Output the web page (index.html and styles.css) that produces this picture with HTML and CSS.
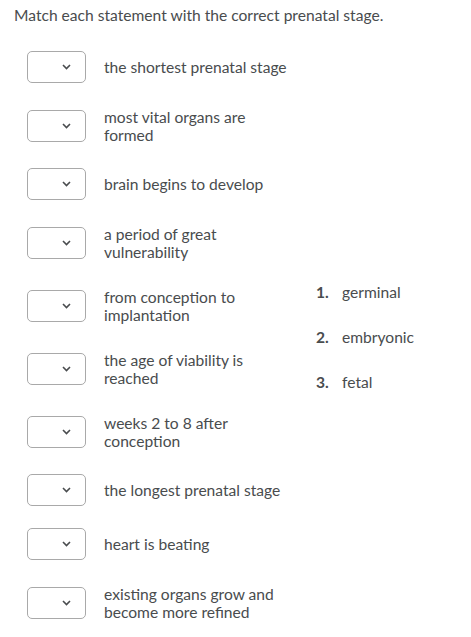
FILE: index.html
```html
<!DOCTYPE html>
<html>
<head>
<meta charset="utf-8">
<link rel="stylesheet" href="styles.css">
</head>
<body>
<p class="prompt">Match each statement with the correct prenatal stage.</p>
<div class="matching">
  <div class="rows">
    <div class="row"><div class="select"><svg width="9" height="6" viewBox="0 0 9 6"><path d="M1 1 L4.5 4.5 L8 1" fill="none" stroke="#494c4e" stroke-width="1.6"/></svg></div><div class="stmt">the shortest prenatal stage</div></div>
    <div class="row"><div class="select"><svg width="9" height="6" viewBox="0 0 9 6"><path d="M1 1 L4.5 4.5 L8 1" fill="none" stroke="#494c4e" stroke-width="1.6"/></svg></div><div class="stmt">most vital organs are formed</div></div>
    <div class="row"><div class="select"><svg width="9" height="6" viewBox="0 0 9 6"><path d="M1 1 L4.5 4.5 L8 1" fill="none" stroke="#494c4e" stroke-width="1.6"/></svg></div><div class="stmt">brain begins to develop</div></div>
    <div class="row"><div class="select"><svg width="9" height="6" viewBox="0 0 9 6"><path d="M1 1 L4.5 4.5 L8 1" fill="none" stroke="#494c4e" stroke-width="1.6"/></svg></div><div class="stmt">a period of great vulnerability</div></div>
    <div class="row"><div class="select"><svg width="9" height="6" viewBox="0 0 9 6"><path d="M1 1 L4.5 4.5 L8 1" fill="none" stroke="#494c4e" stroke-width="1.6"/></svg></div><div class="stmt">from conception to implantation</div></div>
    <div class="row"><div class="select"><svg width="9" height="6" viewBox="0 0 9 6"><path d="M1 1 L4.5 4.5 L8 1" fill="none" stroke="#494c4e" stroke-width="1.6"/></svg></div><div class="stmt">the age of viability is reached</div></div>
    <div class="row"><div class="select"><svg width="9" height="6" viewBox="0 0 9 6"><path d="M1 1 L4.5 4.5 L8 1" fill="none" stroke="#494c4e" stroke-width="1.6"/></svg></div><div class="stmt">weeks 2 to 8 after conception</div></div>
    <div class="row"><div class="select"><svg width="9" height="6" viewBox="0 0 9 6"><path d="M1 1 L4.5 4.5 L8 1" fill="none" stroke="#494c4e" stroke-width="1.6"/></svg></div><div class="stmt">the longest prenatal stage</div></div>
    <div class="row"><div class="select"><svg width="9" height="6" viewBox="0 0 9 6"><path d="M1 1 L4.5 4.5 L8 1" fill="none" stroke="#494c4e" stroke-width="1.6"/></svg></div><div class="stmt">heart is beating</div></div>
    <div class="row"><div class="select"><svg width="9" height="6" viewBox="0 0 9 6"><path d="M1 1 L4.5 4.5 L8 1" fill="none" stroke="#494c4e" stroke-width="1.6"/></svg></div><div class="stmt">existing organs grow and become more refined</div></div>
  </div>
  <ol class="choices">
    <li><span class="num">1.</span><span>germinal</span></li>
    <li><span class="num">2.</span><span>embryonic</span></li>
    <li><span class="num">3.</span><span>fetal</span></li>
  </ol>
</div>
</body>
</html>
```
FILE: styles.css
```css
html, body {
  margin: 0;
  padding: 0;
  background: #ffffff;
}
body {
  font-family: Lato, "Open Sans", sans-serif;
  font-size: 15.6px;
  color: #494c4e;
  padding: 5px 14px;
}
.prompt {
  margin: 0;
  line-height: 20px;
}
.matching {
  display: flex;
  align-items: center;
  margin-top: 26px;
}
.rows {
  display: flex;
  flex-direction: column;
  gap: 22px;
  padding-left: 13px;
}
.row {
  display: flex;
  align-items: center;
  gap: 18px;
}
.select {
  box-sizing: border-box;
  width: 59px;
  height: 32px;
  border: 1px solid #a9a9a9;
  border-radius: 5px;
  display: flex;
  align-items: center;
  justify-content: flex-end;
  padding-right: 14px;
  flex-shrink: 0;
}
.select svg {
  display: block;
}
.stmt {
  width: 188px;
  line-height: 18px;
  padding: 2.5px 0;
}
.choices {
  list-style: none;
  margin: 0 0 0 24px;
  padding: 0;
  display: flex;
  flex-direction: column;
  gap: 25px;
}
.choices li {
  display: flex;
  line-height: 20px;
}
.num {
  width: 26px;
  font-weight: 700;
}
```
